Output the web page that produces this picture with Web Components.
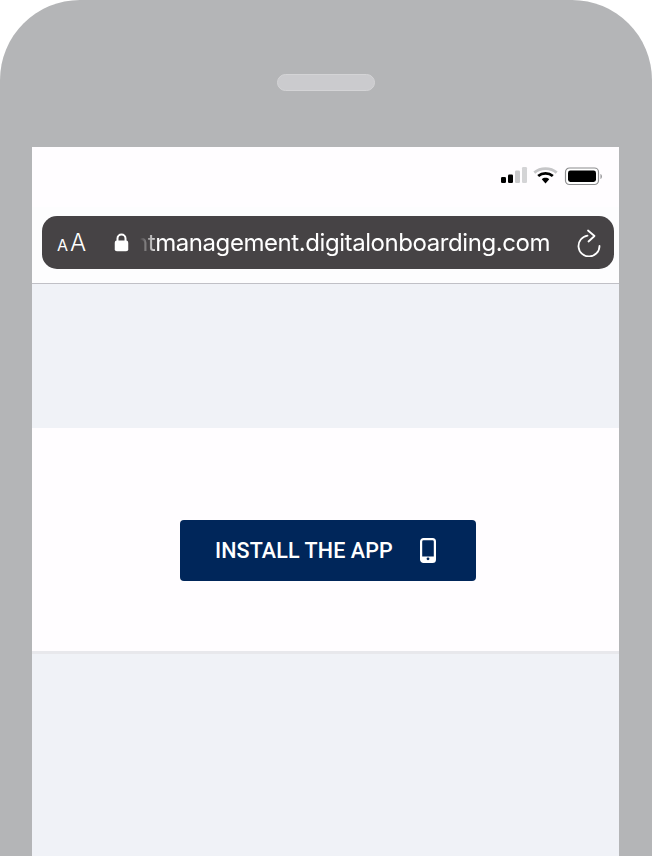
<!DOCTYPE html>
<html><head><meta charset="utf-8">
<style>html,body{margin:0;padding:0;background:#fff;height:856px;overflow:hidden}</style>
</head><body>
<phone-frame>
  <status-bar></status-bar>
  <url-bar url="tmanagement.digitalonboarding.com"></url-bar>
  <page-band h="144"></page-band>
  <install-section></install-section>
  <page-band h="202"></page-band>
</phone-frame>
<script>
class PhoneFrame extends HTMLElement{constructor(){super();this.attachShadow({mode:'open'}).innerHTML=`<style>
:host{display:flex;flex-direction:column;box-sizing:border-box;width:652px;height:856px;background:#b4b5b7;border-radius:80px 80px 0 0;overflow:hidden;padding:74px 33px 0 32px}
.sp{align-self:center;width:98px;height:17px;box-sizing:border-box;margin:0 0 56px 0;border-radius:9px;background:#cbcbce;border:1px solid #d4d4d6;flex:none}
.screen{flex:1;background:#fffdff;display:flex;flex-direction:column;min-height:0}
</style><div class="sp"></div><div class="screen"><slot></slot></div>`}}
customElements.define('phone-frame',PhoneFrame);
class StatusBar extends HTMLElement{constructor(){super();this.attachShadow({mode:'open'}).innerHTML=`<style>
:host{display:flex;justify-content:flex-end;align-items:center;height:60px;padding:0 13px 0 0;box-sizing:border-box;background:#fffdff;flex:none}
svg{display:block;margin:-1px 0 0 0}
</style>
<svg width="106" height="22" viewBox="0 0 106 22">
<rect x="1" y="11" width="5" height="6" rx="1.2" fill="#000"/>
<rect x="8" y="8.5" width="5" height="8.5" rx="1.2" fill="#000"/>
<rect x="15" y="4.5" width="5" height="12.5" rx="1.2" fill="#c9c9cb"/>
<rect x="22" y="1" width="5" height="16" rx="1.2" fill="#d4d4d6"/>
<path d="M34.3 6.6 C40.5 1.2 50.5 1.2 56.7 6.6" fill="none" stroke="#c6c6c8" stroke-width="2.8"/>
<path d="M38.2 10 C42.3 6.4 48.7 6.4 52.8 10" fill="none" stroke="#000" stroke-width="2.8"/>
<path d="M41.8 13.2 C43.8 11.4 47.2 11.4 49.2 13.2 L45.5 17.4 Z" fill="#000"/>
<rect x="65.5" y="2" width="33" height="16.5" rx="4" fill="#fff" stroke="#8c8c8e" stroke-width="1.2"/>
<rect x="68" y="4.5" width="28" height="11.5" rx="2.4" fill="#000"/>
<path d="M100.5 8 C102.3 8.6 102.3 12.4 100.5 13 Z" fill="#8c8c8e"/>
</svg>`}}
customElements.define('status-bar',StatusBar);
class UrlBar extends HTMLElement{constructor(){super();this.attachShadow({mode:'open'}).innerHTML=`<style>
:host{display:block;flex:none;height:77px;box-sizing:border-box;padding:9px 5px 0 10px;border-bottom:1px solid #c0c0c6;background:#fdfdfe}
.bar{display:flex;align-items:center;height:53px;border-radius:15px;background:#464345;color:#fff;font-family:"Inter","Liberation Sans",sans-serif;padding:0 13px 0 15px;box-sizing:border-box}
.aa{width:44px;flex:none;font-size:24px;line-height:1;display:flex;align-items:baseline;font-family:"Inter","Liberation Sans",sans-serif;font-weight:300}
.aa small{font-size:16px;margin-right:2px;font-weight:400}
.lock{flex:none;margin-left:13px;display:block}
.clip{width:410px;margin-left:12px;flex:none;overflow:hidden;white-space:nowrap;display:flex;justify-content:flex-end;font-size:24px;letter-spacing:-.43px;
-webkit-mask-image:linear-gradient(90deg,transparent 0,#000 18px);mask-image:linear-gradient(90deg,transparent 0,#000 18px)}
.clip span::before{content:"n"}
.re{flex:none;margin-left:auto;display:block}
</style><div class="bar"><div class="aa"><small>A</small>A</div>
<svg class="lock" width="15" height="19" viewBox="0 0 14 18"><path d="M3.2 8V5.2a3.8 3.8 0 0 1 7.6 0V8" fill="none" stroke="#fff" stroke-width="1.9"/><rect x="0.6" y="7.2" width="12.8" height="10.2" rx="2" fill="#fff"/></svg>
<div class="clip" style="margin-left:11px"><span></span></div>
<svg class="re" width="24" height="28" viewBox="0 0 24 28"><path d="M10.5 6.6 A10.5 10.5 0 1 0 22.5 17" fill="none" stroke="#fff" stroke-width="1.8" stroke-linecap="round"/><path d="M11 1.5 L17.5 7 L11.5 12.5" fill="none" stroke="#fff" stroke-width="1.8" stroke-linecap="round" stroke-linejoin="round"/></svg>
</div>`;this.shadowRoot.querySelector('.clip span').textContent=this.getAttribute('url')||''}}
customElements.define('url-bar',UrlBar);
class PageBand extends HTMLElement{constructor(){super();this.attachShadow({mode:'open'}).innerHTML=`<style>:host{display:block;flex:none;background:#f0f2f7}</style>`;this.style.height=(this.getAttribute('h')||0)+'px'}}
customElements.define('page-band',PageBand);
class InstallSection extends HTMLElement{constructor(){super();this.attachShadow({mode:'open'}).innerHTML=`<style>
:host{display:flex;flex:none;height:226px;box-sizing:border-box;justify-content:center;align-items:flex-start;padding:92px 0 0 0;background:#fffdff;border-bottom:3px solid #e8e8ec}
button{all:unset;box-sizing:border-box;width:296px;height:61px;background:#00265a;border-radius:4px;color:#fff;display:flex;align-items:center;padding:0 0 0 35px;font:500 21.5px "Roboto",sans-serif;letter-spacing:.1px;margin:0 0 0 5px}
svg{display:block;margin-left:27px}
</style><button>INSTALL THE APP<svg width="16" height="25" viewBox="0 0 16 25"><rect x="1.1" y="1.1" width="13.8" height="22.8" rx="2.4" fill="none" stroke="#fff" stroke-width="2.2"/><rect x="1" y="18.5" width="14" height="5" fill="#fff"/><circle cx="8" cy="20.8" r="1.4" fill="#00265a"/></svg></button>`}}
customElements.define('install-section',InstallSection);
</script></body></html>
